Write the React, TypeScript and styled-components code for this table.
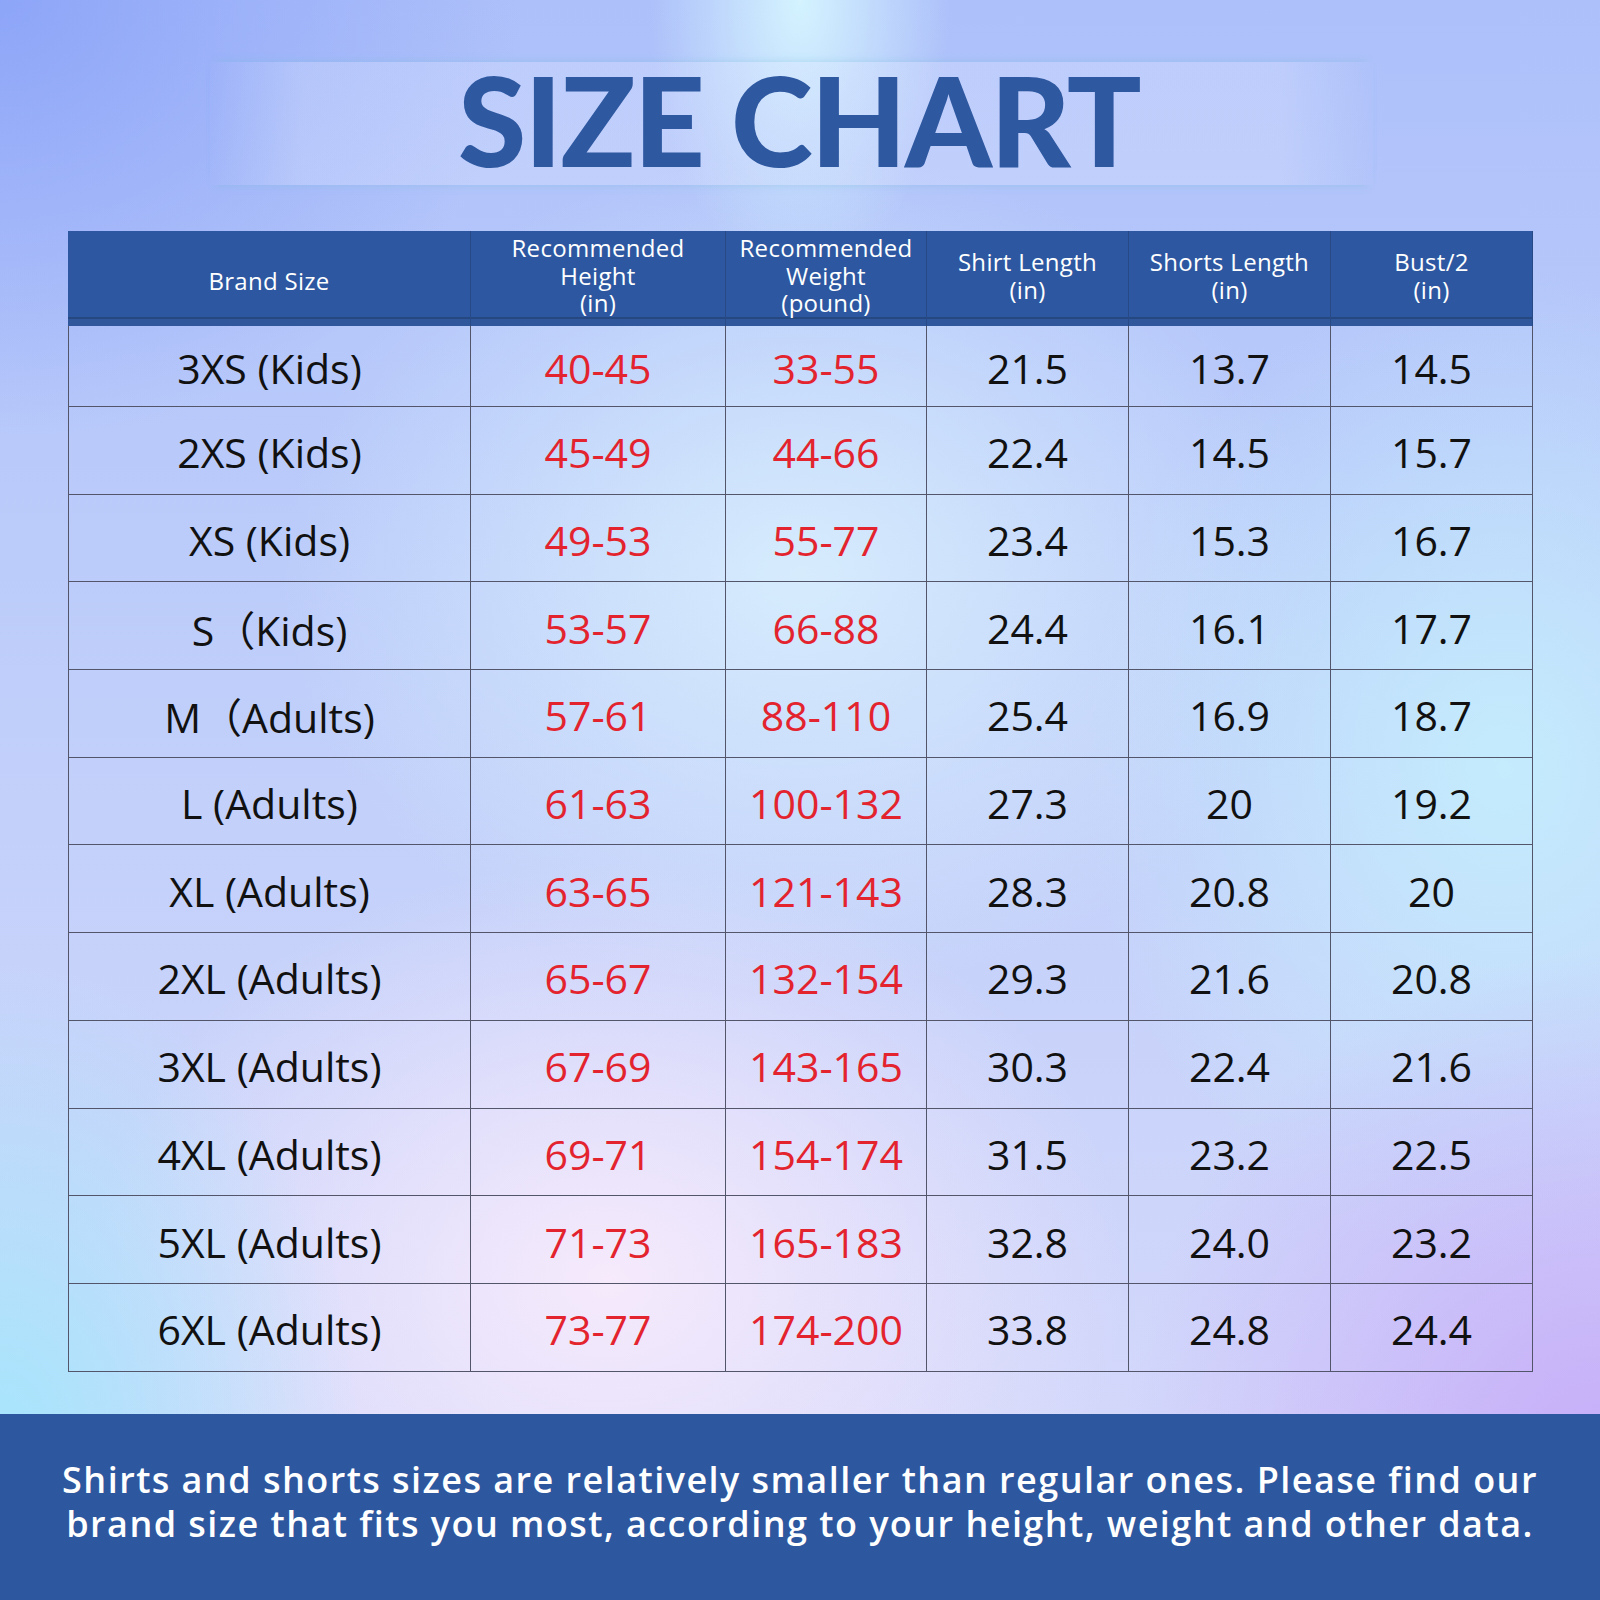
import React from "react";
import styled, { createGlobalStyle } from "styled-components";

const GlobalStyle = createGlobalStyle`
  html, body { margin: 0; padding: 0; }
  body { font-family: "Open Sans", "Noto Sans", sans-serif; }
`;

const Page = styled.div`
  width: 1600px;
  height: 1600px;
  display: flex;
  flex-direction: column;
  overflow: hidden;
  background:
    radial-gradient(ellipse 150px 280px at 50% 0%, rgba(214, 246, 255, 0.95), rgba(214, 246, 255, 0) 100%),
    radial-gradient(ellipse 520px 440px at 0% 0%, rgba(140, 164, 248, 0.95), rgba(140, 164, 248, 0) 100%),
    radial-gradient(ellipse 360px 480px at 0% 90%, rgba(166, 229, 252, 1), rgba(166, 229, 252, 0) 100%),
    radial-gradient(ellipse 480px 520px at 100% 92%, rgba(198, 172, 248, 1), rgba(198, 172, 248, 0) 100%),
    radial-gradient(ellipse 520px 420px at 38% 80%, rgba(246, 234, 252, 1), rgba(246, 234, 252, 0) 100%),
    radial-gradient(ellipse 420px 500px at 94% 48%, rgba(196, 236, 253, 1), rgba(196, 236, 253, 0) 100%),
    radial-gradient(ellipse 520px 420px at 50% 36%, rgba(214, 236, 253, 1), rgba(214, 236, 253, 0) 100%),
    linear-gradient(180deg, #adc0fa 0%, #c0cffa 45%, #d8dafb 100%);
`;

const TitleArea = styled.div`
  height: 231px;
  padding-top: 62px;
  box-sizing: border-box;
  display: flex;
  justify-content: center;
`;

const TitleBand = styled.div`
  width: 1163px;
  height: 123px;
  margin-left: -18px;
  padding-bottom: 10px;
  box-sizing: border-box;
  display: flex;
  justify-content: center;
  align-items: center;
  background: linear-gradient(
    90deg,
    rgba(255, 255, 255, 0) 0%,
    rgba(225, 232, 255, 0.3) 8%,
    rgba(225, 232, 255, 0.3) 92%,
    rgba(255, 255, 255, 0) 100%
  );
  box-shadow: 0 -6px 8px -6px rgba(120, 190, 215, 0.4), 0 6px 8px -6px rgba(120, 190, 215, 0.4);
`;

const Title = styled.h1`
  margin: 0 0 0 16px;
  font-family: "Lato", "Open Sans", sans-serif;
  font-weight: 900;
  font-size: 124px;
  line-height: 1;
  letter-spacing: -1.8px;
  color: #2e58a0;
`;

const Table = styled.div`
  margin-left: 68px;
  width: 1465px;
  display: grid;
  grid-template-columns: 403px 255px 201px 202px 202px 202px;
`;

const HeadCell = styled.div<{ $single?: boolean }>`
  height: 95px;
  box-sizing: border-box;
  display: flex;
  align-items: center;
  justify-content: center;
  padding-top: ${(p) => (p.$single ? "4px" : "0px")};
  padding-bottom: ${(p) => (p.$single ? "0px" : "6px")};
  text-align: center;
  font-family: "Open Sans", sans-serif;
  font-weight: 500;
  font-size: 24px;
  line-height: 27.5px;
  letter-spacing: 0.3px;
  color: #ffffff;
  background: linear-gradient(180deg, #2d58a1 0px, #2d58a1 86px, #24487f 86px, #24487f 88px, #30579c 88px);
  border-right: 1px solid #274a86;
  &:last-of-type {
    border-right: none;
  }
`;

const Cell = styled.div<{ $first?: boolean; $red?: boolean; $top?: boolean }>`
  height: ${(p) => (p.$top ? "81px" : "87.7px")};
  box-sizing: border-box;
  display: flex;
  align-items: center;
  justify-content: center;
  padding-top: 4px;
  font-family: "Open Sans", "Noto Sans CJK SC", sans-serif;
  font-size: 41px;
  color: ${(p) => (p.$red ? "#e3242f" : "#111111")};
  border-right: 1px solid #53566a;
  border-bottom: 1px solid #53566a;
  border-left: ${(p) => (p.$first ? "1px solid #53566a" : "none")};
  white-space: pre;
`;

const Footer = styled.div`
  margin-top: auto;
  height: 186px;
  background: #2d579f;
  display: flex;
  flex-direction: column;
  justify-content: center;
  align-items: center;
  padding-bottom: 10px;
  box-sizing: border-box;
`;

const FooterLine = styled.div`
  font-family: "Open Sans", sans-serif;
  font-weight: 600;
  font-size: 36px;
  line-height: 44px;
  letter-spacing: 1.45px;
  color: #ffffff;
  white-space: nowrap;
`;

const headers: string[][] = [
  ["Brand Size"],
  ["Recommended", "Height", "(in)"],
  ["Recommended", "Weight", "(pound)"],
  ["Shirt Length", "(in)"],
  ["Shorts Length", "(in)"],
  ["Bust/2", "(in)"],
];

const rows: string[][] = [
  ["3XS (Kids)", "40-45", "33-55", "21.5", "13.7", "14.5"],
  ["2XS (Kids)", "45-49", "44-66", "22.4", "14.5", "15.7"],
  ["XS (Kids)", "49-53", "55-77", "23.4", "15.3", "16.7"],
  ["S（Kids)", "53-57", "66-88", "24.4", "16.1", "17.7"],
  ["M（Adults)", "57-61", "88-110", "25.4", "16.9", "18.7"],
  ["L (Adults)", "61-63", "100-132", "27.3", "20", "19.2"],
  ["XL (Adults)", "63-65", "121-143", "28.3", "20.8", "20"],
  ["2XL (Adults)", "65-67", "132-154", "29.3", "21.6", "20.8"],
  ["3XL (Adults)", "67-69", "143-165", "30.3", "22.4", "21.6"],
  ["4XL (Adults)", "69-71", "154-174", "31.5", "23.2", "22.5"],
  ["5XL (Adults)", "71-73", "165-183", "32.8", "24.0", "23.2"],
  ["6XL (Adults)", "73-77", "174-200", "33.8", "24.8", "24.4"],
];

export default function App() {
  return (
    <>
      <GlobalStyle />
      <Page>
        <TitleArea>
          <TitleBand>
            <Title>SIZE CHART</Title>
          </TitleBand>
        </TitleArea>
        <Table>
          {headers.map((lines, i) => (
            <HeadCell key={`h${i}`} $single={lines.length === 1}>
              <div>
                {lines.map((l, j) => (
                  <div key={j}>{l}</div>
                ))}
              </div>
            </HeadCell>
          ))}
          {rows.map((row, r) =>
            row.map((v, c) => (
              <Cell
                key={`${r}-${c}`}
                $first={c === 0}
                $red={c === 1 || c === 2}
                $top={r === 0}
              >
                {v}
              </Cell>
            ))
          )}
        </Table>
        <Footer>
          <FooterLine>Shirts and shorts sizes are relatively smaller than regular ones. Please find our</FooterLine>
          <FooterLine>brand size that fits you most, according to your height, weight and other data.</FooterLine>
        </Footer>
      </Page>
    </>
  );
}
